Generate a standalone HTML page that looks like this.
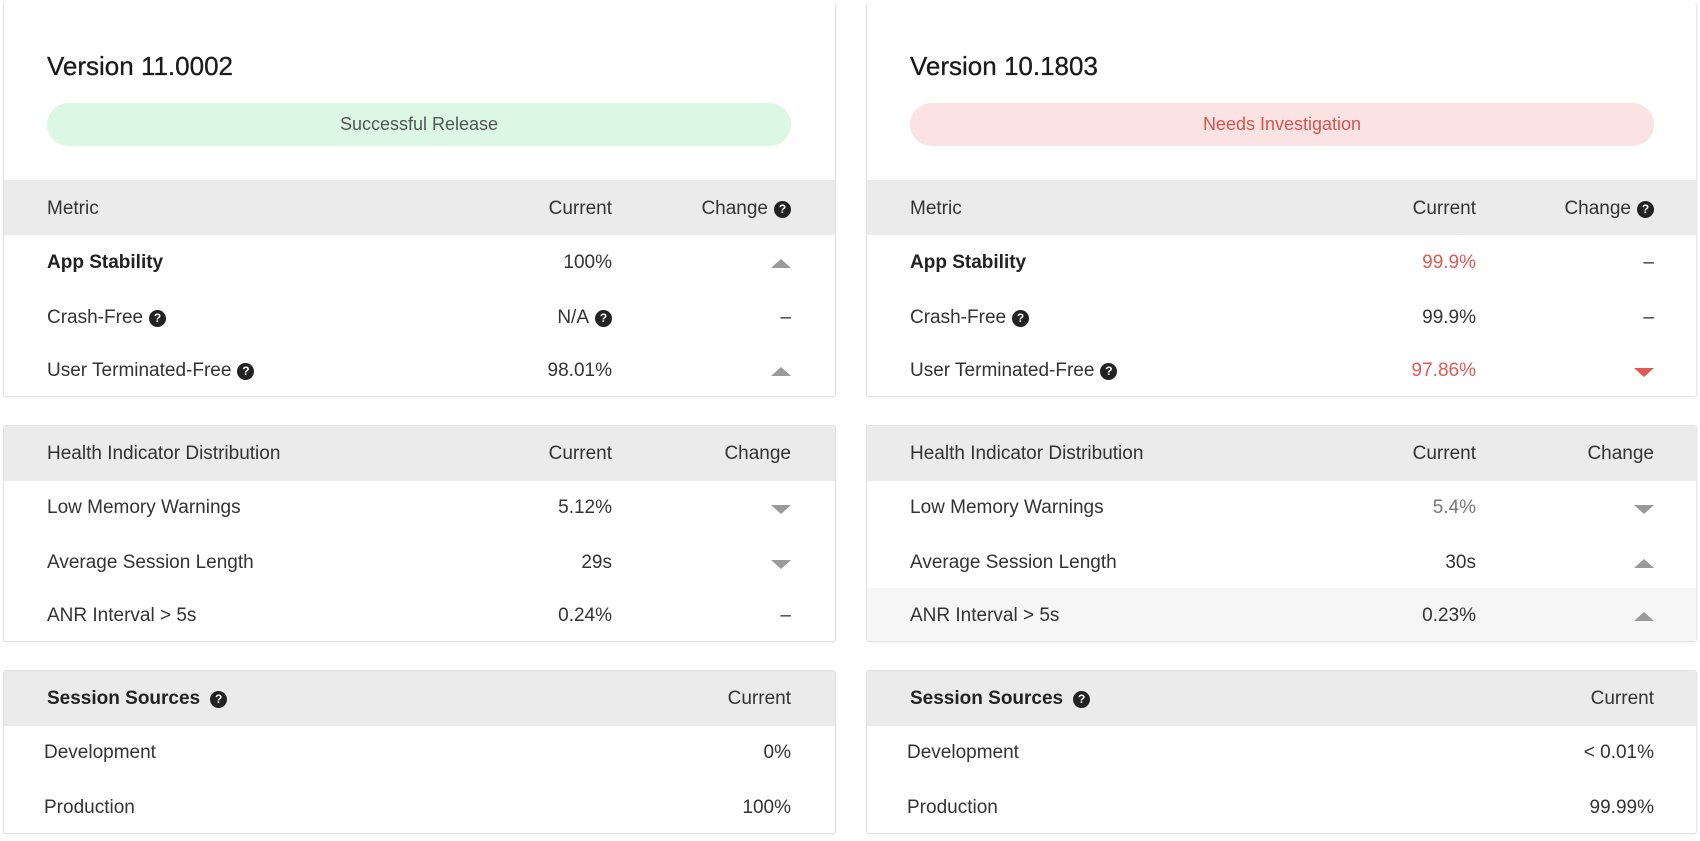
<!DOCTYPE html>
<html><head><meta charset="utf-8"><style>
*{box-sizing:border-box;margin:0;padding:0}
body{width:1700px;height:841px;background:#fff;font-family:"Liberation Sans",Arial,sans-serif;color:#333;position:relative;overflow:hidden}
.card{position:absolute;background:#fff;border:1px solid #e2e2e2;border-radius:3px;box-shadow:0 1px 2px rgba(0,0,0,.05)}
.t{position:absolute;font-size:19px;line-height:24px;white-space:nowrap;margin-top:1px}
.r{text-align:right}
.hd{position:absolute;left:0;right:0;background:#ebebeb}
.q{display:inline-block;width:17px;height:17px;border-radius:50%;background:#222;color:#fff;font-size:12px;line-height:17px;text-align:center;font-weight:bold;vertical-align:1px;margin-left:6px}
.up{position:absolute;width:0;height:0;border-left:10px solid transparent;border-right:10px solid transparent;border-bottom:9px solid #9a9a9a}
.dn{position:absolute;width:0;height:0;border-left:10px solid transparent;border-right:10px solid transparent;border-top:9px solid #9a9a9a}
.red{color:#e05a55}
.pill{position:absolute;height:43px;border-radius:22px;font-size:18px;line-height:43px;text-align:center}
.ti{font-size:26px;line-height:30px;color:#1a1a1a;-webkit-text-stroke:0.3px #1a1a1a}
</style></head><body>

<div class="card" style="left:3px;top:3px;width:833px;height:394px;border-top:0"></div>
<div class="card" style="left:3px;top:425px;width:833px;height:217px"></div>
<div class="card" style="left:3px;top:670px;width:833px;height:164px"></div>
<div class="card" style="left:866px;top:3px;width:831px;height:394px;border-top:0"></div>
<div class="card" style="left:866px;top:425px;width:831px;height:217px"></div>
<div class="card" style="left:866px;top:670px;width:831px;height:164px"></div>

<div class="hd" style="left:4px;right:865px;top:180px;height:55px"></div>
<div class="hd" style="left:4px;right:865px;top:426px;height:55px"></div>
<div class="hd" style="left:4px;right:865px;top:671px;height:55px"></div>
<div class="hd" style="left:867px;right:4px;top:180px;height:55px"></div>
<div class="hd" style="left:867px;right:4px;top:426px;height:55px"></div>
<div class="hd" style="left:867px;right:4px;top:671px;height:55px"></div>
<div style="position:absolute;left:867px;right:4px;top:588px;height:53px;background:#f6f6f6"></div>

<div class="t ti" style="left:47px;top:50px">Version 11.0002</div>
<div class="pill" style="left:47px;width:744px;top:103px;background:#dcf8e4;color:#555">Successful Release</div>
<div class="t ti" style="left:910px;top:50px">Version 10.1803</div>
<div class="pill" style="left:910px;width:744px;top:103px;background:#fbe3e3;color:#d9534f">Needs Investigation</div>

<div class="t" style="left:47px;top:196px">Metric</div>
<div class="t r" style="right:1088px;top:196px">Current</div>
<div class="t r" style="right:909px;top:196px">Change<span class="q">?</span></div>
<div class="t" style="left:47px;top:250px;font-weight:bold;color:#222">App Stability</div>
<div class="t r" style="right:1088px;top:250px">100%</div>
<div class="up" style="left:771px;top:259px"></div>
<div class="t" style="left:47px;top:305px">Crash-Free<span class="q">?</span></div>
<div class="t r" style="right:1088px;top:305px">N/A<span class="q">?</span></div>
<div class="t r" style="right:909px;top:305px">–</div>
<div class="t" style="left:47px;top:358px">User Terminated-Free<span class="q">?</span></div>
<div class="t r" style="right:1088px;top:358px">98.01%</div>
<div class="up" style="left:771px;top:367px"></div>

<div class="t" style="left:47px;top:441px">Health Indicator Distribution</div>
<div class="t r" style="right:1088px;top:441px">Current</div>
<div class="t r" style="right:909px;top:441px">Change</div>
<div class="t" style="left:47px;top:495px">Low Memory Warnings</div>
<div class="t r" style="right:1088px;top:495px">5.12%</div>
<div class="dn" style="left:771px;top:505px"></div>
<div class="t" style="left:47px;top:550px">Average Session Length</div>
<div class="t r" style="right:1088px;top:550px">29s</div>
<div class="dn" style="left:771px;top:560px"></div>
<div class="t" style="left:47px;top:603px">ANR Interval &gt; 5s</div>
<div class="t r" style="right:1088px;top:603px">0.24%</div>
<div class="t r" style="right:909px;top:603px">–</div>

<div class="t" style="left:47px;top:686px;font-weight:bold;color:#222">Session Sources<span class="q" style="margin-left:10px">?</span></div>
<div class="t r" style="right:909px;top:686px">Current</div>
<div class="t" style="left:44px;top:740px">Development</div>
<div class="t r" style="right:909px;top:740px">0%</div>
<div class="t" style="left:44px;top:795px">Production</div>
<div class="t r" style="right:909px;top:795px">100%</div>

<div class="t" style="left:910px;top:196px">Metric</div>
<div class="t r" style="right:224px;top:196px">Current</div>
<div class="t r" style="right:46px;top:196px">Change<span class="q">?</span></div>
<div class="t" style="left:910px;top:250px;font-weight:bold;color:#222">App Stability</div>
<div class="t r red" style="right:224px;top:250px">99.9%</div>
<div class="t r" style="right:46px;top:250px">–</div>
<div class="t" style="left:910px;top:305px">Crash-Free<span class="q">?</span></div>
<div class="t r" style="right:224px;top:305px">99.9%</div>
<div class="t r" style="right:46px;top:305px">–</div>
<div class="t" style="left:910px;top:358px">User Terminated-Free<span class="q">?</span></div>
<div class="t r red" style="right:224px;top:358px">97.86%</div>
<div class="dn" style="left:1634px;top:368px;border-top-color:#e05a55"></div>

<div class="t" style="left:910px;top:441px">Health Indicator Distribution</div>
<div class="t r" style="right:224px;top:441px">Current</div>
<div class="t r" style="right:46px;top:441px">Change</div>
<div class="t" style="left:910px;top:495px">Low Memory Warnings</div>
<div class="t r" style="right:224px;top:495px;color:#777">5.4%</div>
<div class="dn" style="left:1634px;top:505px"></div>
<div class="t" style="left:910px;top:550px">Average Session Length</div>
<div class="t r" style="right:224px;top:550px">30s</div>
<div class="up" style="left:1634px;top:559px"></div>
<div class="t" style="left:910px;top:603px">ANR Interval &gt; 5s</div>
<div class="t r" style="right:224px;top:603px">0.23%</div>
<div class="up" style="left:1634px;top:612px"></div>

<div class="t" style="left:910px;top:686px;font-weight:bold;color:#222">Session Sources<span class="q" style="margin-left:10px">?</span></div>
<div class="t r" style="right:46px;top:686px">Current</div>
<div class="t" style="left:907px;top:740px">Development</div>
<div class="t r" style="right:46px;top:740px">&lt; 0.01%</div>
<div class="t" style="left:907px;top:795px">Production</div>
<div class="t r" style="right:46px;top:795px">99.99%</div>

</body></html>
